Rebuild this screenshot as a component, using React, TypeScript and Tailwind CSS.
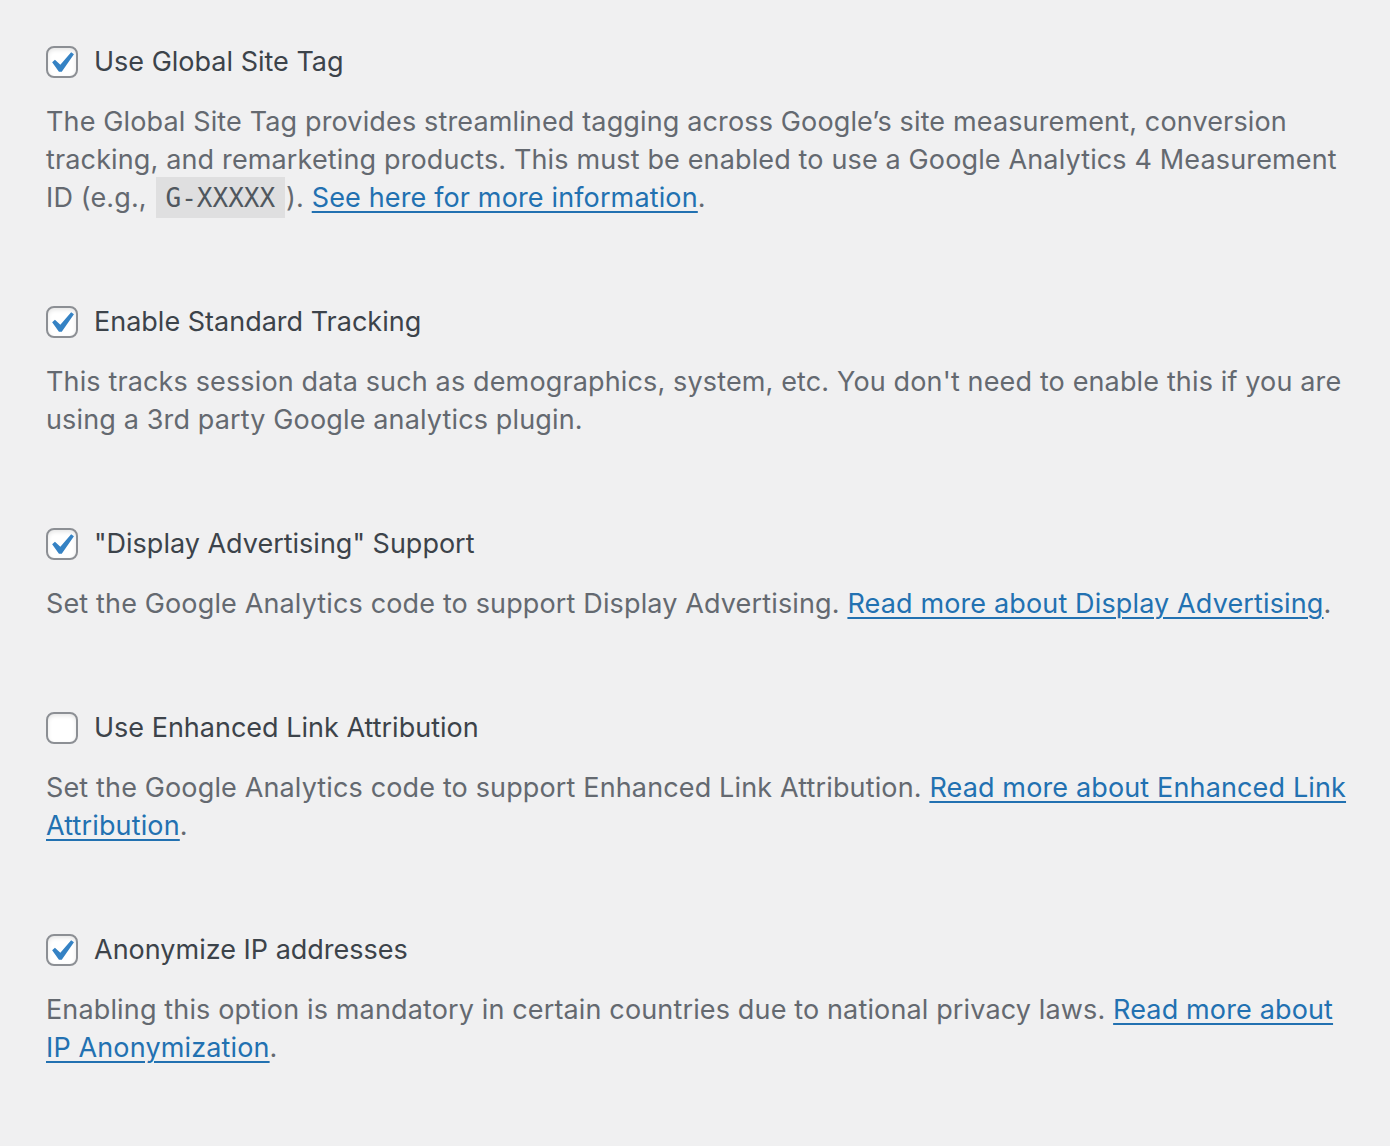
const linkCls = "text-[#2271b1] underline decoration-2 underline-offset-[4px]";

const items = [
  {
    label: "Use Global Site Tag",
    checked: true,
    desc: (
      <>
        The Global Site Tag provides streamlined tagging across Google’s site measurement, conversion
        tracking, and remarketing products. This must be enabled to use a Google Analytics 4 Measurement
        ID (e.g.,{" "}
        <code className="mx-px whitespace-nowrap bg-[#dfdfe0] px-[10px] pt-[6px] pb-[5px] font-['DejaVu_Sans_Mono',monospace] text-[26px] tracking-normal text-[#50575e]">
          G-XXXXX
        </code>
        ). <a href="#" className={linkCls}>See here for more information</a>.
      </>
    ),
  },
  {
    label: "Enable Standard Tracking",
    checked: true,
    desc: (
      <>
        This tracks session data such as demographics, system, etc. You don't need to enable this if you are
        using a 3rd party Google analytics plugin.
      </>
    ),
  },
  {
    label: "\"Display Advertising\" Support",
    checked: true,
    desc: (
      <>
        Set the Google Analytics code to support Display Advertising.{" "}
        <a href="#" className={linkCls}>Read more about Display Advertising</a>.
      </>
    ),
  },
  {
    label: "Use Enhanced Link Attribution",
    checked: false,
    desc: (
      <>
        Set the Google Analytics code to support Enhanced Link Attribution.{" "}
        <a href="#" className={linkCls}>Read more about Enhanced Link Attribution</a>.
      </>
    ),
  },
  {
    label: "Anonymize IP addresses",
    checked: true,
    desc: (
      <>
        Enabling this option is mandatory in certain countries due to national privacy laws.{" "}
        <a href="#" className={linkCls}>Read more about IP Anonymization</a>.
      </>
    ),
  },
];

function Checkbox({ checked }: { checked: boolean }) {
  return (
    <span className="relative block h-8 w-8 shrink-0 rounded-lg border-2 border-[#8c8f94] bg-white shadow-[inset_0_2px_4px_rgba(0,0,0,0.1)]">
      {checked && (
        <svg viewBox="0 0 20 20" className="absolute left-[-8px] top-[-6px] h-[42px] w-[42px]">
          <path fill="#3582c4" d="M14.83 4.89l1.34.94-5.81 8.38H9.02L5.78 9.67l1.34-1.25 2.57 2.4z" />
        </svg>
      )}
    </span>
  );
}

export default function App() {
  return (
    <div className="min-h-screen bg-[#f0f0f1] pl-[46px] pr-[26px] pt-[46px] font-['Inter',sans-serif]">
      <div className="flex flex-col gap-[89px]">
        {items.map((it) => (
          <section key={it.label}>
            <label className="flex h-8 items-center gap-4 text-[27px] text-[#3c434a]">
              <Checkbox checked={it.checked} />
              <span>{it.label}</span>
            </label>
            <p className="mt-[25px] text-[27px] leading-[38px] tracking-[0.14px] text-[#646970]">{it.desc}</p>
          </section>
        ))}
      </div>
    </div>
  );
}
